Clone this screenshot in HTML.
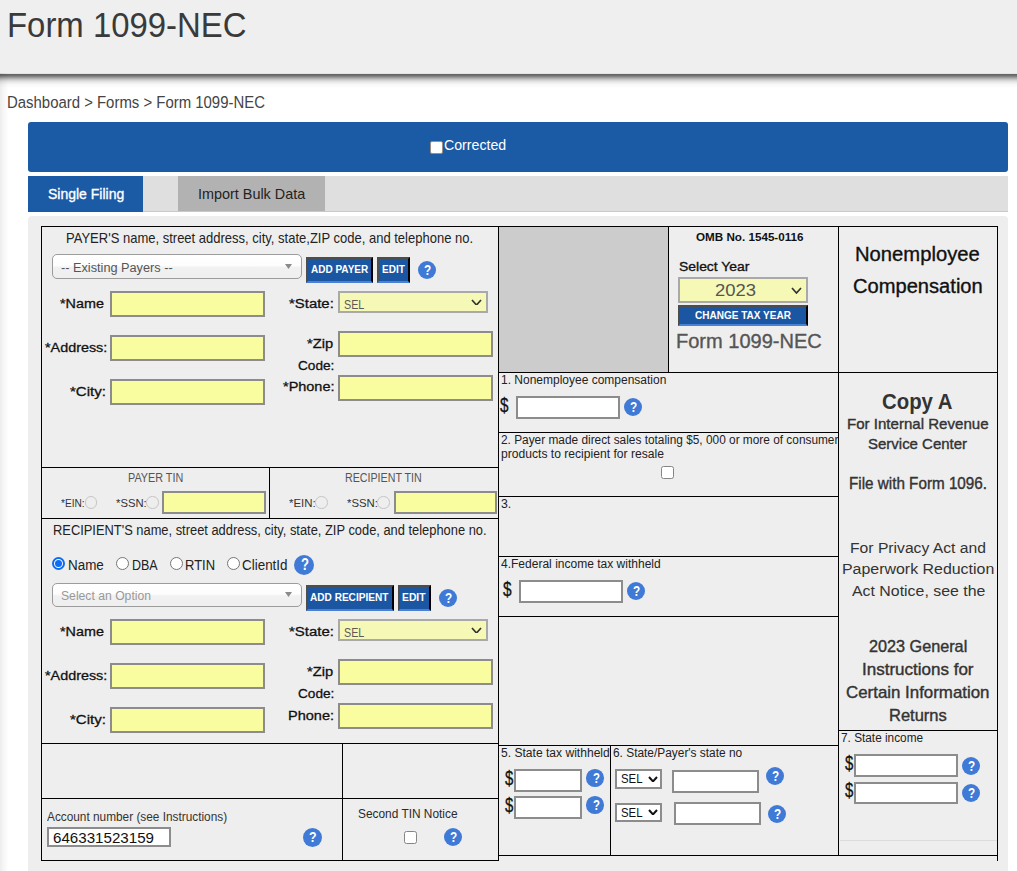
<!DOCTYPE html>
<html><head><meta charset="utf-8"><title>Form 1099-NEC</title>
<style>
html,body{margin:0;padding:0;background:#fff;width:1017px;height:871px;overflow:hidden;position:relative}
.t{position:absolute;white-space:nowrap;line-height:1;font-family:"Liberation Sans",sans-serif;transform-origin:0 0}
.r{position:absolute}
.bm{display:inline-block;width:0;height:0}
.q{position:absolute;border-radius:50%;background:#3f7ad6}
</style></head><body>
<div class="r" style="left:0px;top:0px;width:1017px;height:73px;background:#efefef"></div>
<div class="r" style="left:0px;top:73px;width:8px;height:798px;background:linear-gradient(90deg,#ededed,#f5f5f5 3px,#fcfcfc 7px,#fff)"></div>
<div class="r" style="left:0px;top:73px;width:1017px;height:1px;background:rgba(0,0,0,0.106)"></div>
<div class="r" style="left:0px;top:74px;width:1017px;height:1px;background:rgba(0,0,0,0.600)"></div>
<div class="r" style="left:0px;top:75px;width:1017px;height:1px;background:rgba(0,0,0,0.561)"></div>
<div class="r" style="left:0px;top:76px;width:1017px;height:1px;background:rgba(0,0,0,0.478)"></div>
<div class="r" style="left:0px;top:77px;width:1017px;height:1px;background:rgba(0,0,0,0.388)"></div>
<div class="r" style="left:0px;top:78px;width:1017px;height:1px;background:rgba(0,0,0,0.302)"></div>
<div class="r" style="left:0px;top:79px;width:1017px;height:1px;background:rgba(0,0,0,0.227)"></div>
<div class="r" style="left:0px;top:80px;width:1017px;height:1px;background:rgba(0,0,0,0.165)"></div>
<div class="r" style="left:0px;top:81px;width:1017px;height:1px;background:rgba(0,0,0,0.114)"></div>
<div class="r" style="left:0px;top:82px;width:1017px;height:1px;background:rgba(0,0,0,0.078)"></div>
<div class="r" style="left:0px;top:83px;width:1017px;height:1px;background:rgba(0,0,0,0.051)"></div>
<div class="r" style="left:0px;top:84px;width:1017px;height:1px;background:rgba(0,0,0,0.031)"></div>
<div class="r" style="left:0px;top:85px;width:1017px;height:1px;background:rgba(0,0,0,0.020)"></div>
<div class="r" style="left:0px;top:86px;width:1017px;height:1px;background:rgba(0,0,0,0.012)"></div>
<div class="r" style="left:0px;top:87px;width:1017px;height:1px;background:rgba(0,0,0,0.004)"></div>
<div class="t" style="left:7.07px;top:8.00px;font-size:34.59px;color:#3a3a3a;transform:scaleX(0.9513);">Form 1099-NEC<span class="bm"></span></div>
<div class="t" style="left:7.10px;top:94.10px;font-size:16.13px;color:#444;transform:scaleX(0.9263);">Dashboard &gt; Forms &gt; Form 1099-NEC<span class="bm"></span></div>
<div class="r" style="left:28px;top:122px;width:980px;height:50px;background:#1b5aa5;border-radius:3px"></div>
<div class="r" style="left:430px;top:141px;width:13px;height:13px;background:#fff;border:1px solid #9a8f80;border-radius:2px;box-sizing:border-box"></div>
<div class="t" style="left:443.79px;top:138.01px;font-size:14.97px;color:#fff;transform:scaleX(0.9453);">Corrected<span class="bm"></span></div>
<div class="r" style="left:28px;top:176px;width:980px;height:36px;background:#dfdfdf;border-bottom:1px solid #c9c9c9;box-sizing:border-box"></div>
<div class="r" style="left:28px;top:176px;width:115px;height:36px;background:#1b5aa5"></div>
<div class="t" style="left:47.57px;top:185.51px;font-size:15.12px;color:#fff;transform:scaleX(0.9263);-webkit-text-stroke:0.35px #fff;">Single Filing<span class="bm"></span></div>
<div class="r" style="left:178px;top:176px;width:147px;height:35px;background:#b2b2b2"></div>
<div class="t" style="left:197.90px;top:185.91px;font-size:15.55px;color:#222;transform:scaleX(0.9258);">Import Bulk Data<span class="bm"></span></div>
<div class="r" style="left:28px;top:216px;width:980px;height:684px;background:#eeeeee;border-radius:4px"></div>
<div class="r" style="left:499px;top:227px;width:169px;height:145px;background:#cccccc"></div>
<div class="r" style="left:41px;top:226px;width:457px;height:1px;background:#000"></div>
<div class="r" style="left:41px;top:226px;width:1px;height:635px;background:#000"></div>
<div class="r" style="left:41px;top:467px;width:457px;height:1px;background:#000"></div>
<div class="r" style="left:269px;top:467px;width:1px;height:51px;background:#000"></div>
<div class="r" style="left:41px;top:518px;width:457px;height:1px;background:#000"></div>
<div class="r" style="left:41px;top:743px;width:457px;height:1px;background:#000"></div>
<div class="r" style="left:342px;top:743px;width:1px;height:117px;background:#000"></div>
<div class="r" style="left:41px;top:798px;width:457px;height:1px;background:#000"></div>
<div class="r" style="left:41px;top:860px;width:457px;height:1px;background:#000"></div>
<div class="r" style="left:498px;top:226px;width:1px;height:635px;background:#000"></div>
<div class="r" style="left:498px;top:226px;width:500px;height:1px;background:#000"></div>
<div class="r" style="left:668px;top:226px;width:1px;height:146px;background:#000"></div>
<div class="r" style="left:838px;top:226px;width:1px;height:629px;background:#000"></div>
<div class="r" style="left:498px;top:372px;width:500px;height:1px;background:#000"></div>
<div class="r" style="left:498px;top:432px;width:340px;height:1px;background:#000"></div>
<div class="r" style="left:498px;top:496px;width:340px;height:1px;background:#000"></div>
<div class="r" style="left:498px;top:556px;width:340px;height:1px;background:#000"></div>
<div class="r" style="left:498px;top:616px;width:340px;height:1px;background:#000"></div>
<div class="r" style="left:498px;top:745px;width:340px;height:1px;background:#000"></div>
<div class="r" style="left:610px;top:745px;width:1px;height:110px;background:#000"></div>
<div class="r" style="left:498px;top:855px;width:500px;height:1px;background:#000"></div>
<div class="r" style="left:997px;top:226px;width:1px;height:635px;background:#000"></div>
<div class="r" style="left:838px;top:730px;width:160px;height:1px;background:#000"></div>
<div class="r" style="left:840px;top:840px;width:157px;height:1px;background:#dcdcdc"></div>
<div class="t" style="left:66.36px;top:231.20px;font-size:14.10px;color:#222;transform:scaleX(0.9228);">PAYER&#x27;S name, street address, city, state,ZIP code, and telephone no.<span class="bm"></span></div>
<div class="r" style="left:52px;top:254px;width:250px;height:25px;background:linear-gradient(#ffffff 0%,#fdfdfd 45%,#f1f1f1 55%,#efefef 100%);border:1px solid #9c9c9c;border-radius:5px;box-sizing:border-box"></div>
<div class="t" style="left:60.93px;top:261.61px;font-size:12.50px;color:#555;transform:scaleX(1.0173);">-- Existing Payers --<span class="bm"></span></div>
<svg class="r" style="left:285.0px;top:263.9px" width="7" height="4.9"><polygon points="0,0 7,0 3.5,4.9" fill="#8a8a8a"/></svg>
<div class="r" style="left:306px;top:257px;width:67px;height:26px;background:#1b56a2;border-style:solid;border-width:2px;border-color:#4d4d4d #000 #4a80d6 #4d4d4d;box-sizing:border-box"></div>
<div class="t" style="left:311.05px;top:264.91px;font-size:10.40px;color:#fff;font-weight:bold;transform:scaleX(0.9624);">ADD PAYER<span class="bm"></span></div>
<div class="r" style="left:377px;top:257px;width:33px;height:26px;background:#1b56a2;border-style:solid;border-width:2px;border-color:#4d4d4d #000 #4a80d6 #4d4d4d;box-sizing:border-box"></div>
<div class="t" style="left:381.95px;top:264.91px;font-size:10.40px;color:#fff;font-weight:bold;transform:scaleX(0.9615);">EDIT<span class="bm"></span></div>
<div class="q" style="left:418.0px;top:261.0px;width:18px;height:18px"></div>
<div class="t" style="left:424.47px;top:263.00px;font-size:14.53px;color:#fff;font-weight:bold;transform:scaleX(0.8094);">?<span class="bm"></span></div>
<div class="t" style="left:60.48px;top:297.01px;font-size:13.08px;color:#111;transform:scaleX(1.0975);-webkit-text-stroke:0.3px #111;">*Name<span class="bm"></span></div>
<div class="r" style="left:110px;top:291px;width:155px;height:26px;background:#fafca0;border:2px solid #8c8c8c;box-sizing:border-box"></div>
<div class="t" style="left:44.98px;top:341.01px;font-size:13.23px;color:#111;transform:scaleX(1.0867);-webkit-text-stroke:0.3px #111;">*Address:<span class="bm"></span></div>
<div class="r" style="left:110px;top:335px;width:155px;height:26px;background:#fafca0;border:2px solid #8c8c8c;box-sizing:border-box"></div>
<div class="t" style="left:70.37px;top:385.20px;font-size:13.23px;color:#111;transform:scaleX(1.1407);-webkit-text-stroke:0.3px #111;">*City:<span class="bm"></span></div>
<div class="r" style="left:110px;top:379px;width:155px;height:26px;background:#fafca0;border:2px solid #8c8c8c;box-sizing:border-box"></div>
<div class="t" style="left:289.28px;top:297.01px;font-size:13.23px;color:#111;transform:scaleX(1.1282);-webkit-text-stroke:0.3px #111;">*State:<span class="bm"></span></div>
<div class="r" style="left:338px;top:291px;width:150px;height:22px;background:#f6f8b6;border:2px solid #a9a9a9;box-sizing:border-box"></div>
<div class="t" style="left:344.02px;top:299.32px;font-size:12.50px;color:#5a5a5a;transform:scaleX(0.8595);">SEL<span class="bm"></span></div>
<svg class="r" style="left:470.5px;top:298.5px" width="11" height="6.95"><polyline points="1,1 5.5,6.0 10.0,1" fill="none" stroke="#333" stroke-width="1.7"/></svg>
<div class="t" style="left:307.18px;top:336.51px;font-size:13.23px;color:#111;transform:scaleX(1.1121);-webkit-text-stroke:0.3px #111;">*Zip<span class="bm"></span></div>
<div class="t" style="left:297.62px;top:359.40px;font-size:13.23px;color:#111;transform:scaleX(1.0300);-webkit-text-stroke:0.3px #111;">Code:<span class="bm"></span></div>
<div class="r" style="left:338px;top:331px;width:155px;height:26px;background:#fafca0;border:2px solid #8c8c8c;box-sizing:border-box"></div>
<div class="t" style="left:282.58px;top:380.31px;font-size:13.23px;color:#111;transform:scaleX(1.0935);-webkit-text-stroke:0.3px #111;">*Phone:<span class="bm"></span></div>
<div class="r" style="left:338px;top:375px;width:155px;height:26px;background:#fafca0;border:2px solid #8c8c8c;box-sizing:border-box"></div>
<div class="t" style="left:127.93px;top:473.01px;font-size:11.92px;color:#555;transform:scaleX(0.9085);">PAYER TIN<span class="bm"></span></div>
<div class="t" style="left:61.35px;top:496.51px;font-size:11.63px;color:#333;transform:scaleX(0.8697);">*EIN:<span class="bm"></span></div>
<div class="r" style="left:84.6px;top:496px;width:12.5px;height:12.5px;border-radius:50%;border:1px solid #c6c6c6;box-sizing:border-box"></div>
<div class="t" style="left:116.33px;top:496.51px;font-size:11.63px;color:#333;transform:scaleX(0.9702);">*SSN:<span class="bm"></span></div>
<div class="r" style="left:146px;top:496px;width:12.5px;height:12.5px;border-radius:50%;border:1px solid #c6c6c6;box-sizing:border-box"></div>
<div class="r" style="left:162px;top:491px;width:104px;height:23px;background:#fafca0;border:2px solid #8c8c8c;box-sizing:border-box"></div>
<div class="t" style="left:345.15px;top:473.01px;font-size:11.92px;color:#555;transform:scaleX(0.8958);">RECIPIENT TIN<span class="bm"></span></div>
<div class="t" style="left:289.33px;top:496.51px;font-size:11.63px;color:#333;transform:scaleX(0.9856);">*EIN:<span class="bm"></span></div>
<div class="r" style="left:315px;top:496px;width:12.5px;height:12.5px;border-radius:50%;border:1px solid #c6c6c6;box-sizing:border-box"></div>
<div class="t" style="left:347.13px;top:496.51px;font-size:11.63px;color:#333;transform:scaleX(0.9767);">*SSN:<span class="bm"></span></div>
<div class="r" style="left:377px;top:496px;width:12.5px;height:12.5px;border-radius:50%;border:1px solid #c6c6c6;box-sizing:border-box"></div>
<div class="r" style="left:393.5px;top:491px;width:103.5px;height:23px;background:#fafca0;border:2px solid #8c8c8c;box-sizing:border-box"></div>
<div class="t" style="left:52.97px;top:523.82px;font-size:13.81px;color:#222;transform:scaleX(0.9333);">RECIPIENT&#x27;S name, street address, city, state, ZIP code, and telephone no.<span class="bm"></span></div>
<div class="r" style="left:52px;top:557px;width:13px;height:13px;border-radius:50%;border:2px solid #0b6cf4;box-sizing:border-box;background:#fff"></div>
<div class="r" style="left:55px;top:560px;width:7px;height:7px;border-radius:50%;background:#0b6cf4"></div>
<div class="t" style="left:68.03px;top:558.00px;font-size:14.24px;color:#222;transform:scaleX(0.9425);">Name<span class="bm"></span></div>
<div class="r" style="left:116px;top:557px;width:13px;height:13px;border-radius:50%;border:1px solid #767676;box-sizing:border-box;background:#fff"></div>
<div class="t" style="left:131.70px;top:558.00px;font-size:14.24px;color:#222;transform:scaleX(0.8780);">DBA<span class="bm"></span></div>
<div class="r" style="left:170px;top:557px;width:13px;height:13px;border-radius:50%;border:1px solid #767676;box-sizing:border-box;background:#fff"></div>
<div class="t" style="left:184.96px;top:558.00px;font-size:14.24px;color:#222;transform:scaleX(0.9122);">RTIN<span class="bm"></span></div>
<div class="r" style="left:227px;top:557px;width:13px;height:13px;border-radius:50%;border:1px solid #767676;box-sizing:border-box;background:#fff"></div>
<div class="t" style="left:242.33px;top:558.00px;font-size:14.24px;color:#222;transform:scaleX(0.9432);">ClientId<span class="bm"></span></div>
<div class="q" style="left:294.0px;top:554.5px;width:20px;height:20px"></div>
<div class="t" style="left:301.19px;top:556.06px;font-size:16.15px;color:#fff;font-weight:bold;transform:scaleX(0.8094);">?<span class="bm"></span></div>
<div class="r" style="left:52px;top:583px;width:250px;height:24px;background:linear-gradient(#ffffff 0%,#fdfdfd 45%,#f1f1f1 55%,#efefef 100%);border:1px solid #9c9c9c;border-radius:5px;box-sizing:border-box"></div>
<div class="t" style="left:60.75px;top:589.01px;font-size:13.08px;color:#999;transform:scaleX(0.9308);">Select an Option<span class="bm"></span></div>
<svg class="r" style="left:285.0px;top:591.9px" width="7" height="4.9"><polygon points="0,0 7,0 3.5,4.9" fill="#8a8a8a"/></svg>
<div class="r" style="left:306px;top:585px;width:88px;height:26px;background:#1b56a2;border-style:solid;border-width:2px;border-color:#4d4d4d #000 #4a80d6 #4d4d4d;box-sizing:border-box"></div>
<div class="t" style="left:310.35px;top:593.00px;font-size:10.40px;color:#fff;font-weight:bold;transform:scaleX(0.9696);">ADD RECIPIENT<span class="bm"></span></div>
<div class="r" style="left:398px;top:585px;width:33px;height:26px;background:#1b56a2;border-style:solid;border-width:2px;border-color:#4d4d4d #000 #4a80d6 #4d4d4d;box-sizing:border-box"></div>
<div class="t" style="left:401.83px;top:593.00px;font-size:10.40px;color:#fff;font-weight:bold;transform:scaleX(0.9921);">EDIT<span class="bm"></span></div>
<div class="q" style="left:439.0px;top:589.0px;width:18px;height:18px"></div>
<div class="t" style="left:445.47px;top:591.00px;font-size:14.53px;color:#fff;font-weight:bold;transform:scaleX(0.8094);">?<span class="bm"></span></div>
<div class="t" style="left:60.48px;top:624.81px;font-size:13.23px;color:#111;transform:scaleX(1.0855);-webkit-text-stroke:0.3px #111;">*Name<span class="bm"></span></div>
<div class="r" style="left:110px;top:619px;width:155px;height:26px;background:#fafca0;border:2px solid #8c8c8c;box-sizing:border-box"></div>
<div class="t" style="left:44.98px;top:669.01px;font-size:13.23px;color:#111;transform:scaleX(1.0867);-webkit-text-stroke:0.3px #111;">*Address:<span class="bm"></span></div>
<div class="r" style="left:110px;top:663px;width:155px;height:26px;background:#fafca0;border:2px solid #8c8c8c;box-sizing:border-box"></div>
<div class="t" style="left:70.37px;top:712.60px;font-size:13.23px;color:#111;transform:scaleX(1.1407);-webkit-text-stroke:0.3px #111;">*City:<span class="bm"></span></div>
<div class="r" style="left:110px;top:707px;width:155px;height:26px;background:#fafca0;border:2px solid #8c8c8c;box-sizing:border-box"></div>
<div class="t" style="left:288.78px;top:624.70px;font-size:13.23px;color:#111;transform:scaleX(1.1334);-webkit-text-stroke:0.3px #111;">*State:<span class="bm"></span></div>
<div class="r" style="left:338px;top:619px;width:150px;height:22px;background:#f6f8b6;border:2px solid #a9a9a9;box-sizing:border-box"></div>
<div class="t" style="left:344.02px;top:627.32px;font-size:12.50px;color:#5a5a5a;transform:scaleX(0.8595);">SEL<span class="bm"></span></div>
<svg class="r" style="left:470.5px;top:626.5px" width="11" height="6.95"><polyline points="1,1 5.5,6.0 10.0,1" fill="none" stroke="#333" stroke-width="1.7"/></svg>
<div class="t" style="left:307.18px;top:664.81px;font-size:13.23px;color:#111;transform:scaleX(1.1121);-webkit-text-stroke:0.3px #111;">*Zip<span class="bm"></span></div>
<div class="t" style="left:297.62px;top:687.40px;font-size:13.23px;color:#111;transform:scaleX(1.0300);-webkit-text-stroke:0.3px #111;">Code:<span class="bm"></span></div>
<div class="r" style="left:338px;top:659px;width:155px;height:26px;background:#fafca0;border:2px solid #8c8c8c;box-sizing:border-box"></div>
<div class="t" style="left:288.04px;top:708.60px;font-size:13.23px;color:#111;transform:scaleX(1.0981);-webkit-text-stroke:0.3px #111;">Phone:<span class="bm"></span></div>
<div class="r" style="left:338px;top:703px;width:155px;height:26px;background:#fafca0;border:2px solid #8c8c8c;box-sizing:border-box"></div>
<div class="t" style="left:47.20px;top:810.50px;font-size:12.35px;color:#333;transform:scaleX(0.9581);">Account number (see Instructions)<span class="bm"></span></div>
<div class="r" style="left:47px;top:827px;width:124px;height:20px;background:#fff;border:2px solid #8c8c8c;box-sizing:border-box"></div>
<div class="t" style="left:52.64px;top:830.71px;font-size:14.97px;color:#111;transform:scaleX(1.0111);">646331523159<span class="bm"></span></div>
<div class="q" style="left:302.5px;top:827.5px;width:19px;height:19px"></div>
<div class="t" style="left:309.33px;top:829.29px;font-size:15.34px;color:#fff;font-weight:bold;transform:scaleX(0.8094);">?<span class="bm"></span></div>
<div class="t" style="left:358.46px;top:808.11px;font-size:12.65px;color:#2a2a2a;transform:scaleX(0.9402);">Second TIN Notice<span class="bm"></span></div>
<div class="r" style="left:404px;top:831px;width:13px;height:13px;border-radius:2.5px;border:1px solid #858585;box-sizing:border-box;background:#fff"></div>
<div class="q" style="left:444.0px;top:828.0px;width:18px;height:18px"></div>
<div class="t" style="left:450.47px;top:830.00px;font-size:14.53px;color:#fff;font-weight:bold;transform:scaleX(0.8094);">?<span class="bm"></span></div>
<div class="t" style="left:695.93px;top:232.60px;font-size:10.47px;color:#111;font-weight:bold;transform:scaleX(1.1132);">OMB No. 1545-0116<span class="bm"></span></div>
<div class="t" style="left:678.67px;top:259.71px;font-size:13.66px;color:#111;transform:scaleX(1.0198);-webkit-text-stroke:0.35px #111;">Select Year<span class="bm"></span></div>
<div class="r" style="left:678px;top:277px;width:130px;height:26px;background:#f6f8b6;border:2px solid #a9a9a9;box-sizing:border-box"></div>
<div class="t" style="left:715.08px;top:281.70px;font-size:17.15px;color:#555;transform:scaleX(1.0760);">2023<span class="bm"></span></div>
<svg class="r" style="left:790.5px;top:287.0px" width="11" height="6.95"><polyline points="1,1 5.5,6.0 10.0,1" fill="none" stroke="#333" stroke-width="1.7"/></svg>
<div class="r" style="left:678px;top:305px;width:130px;height:21px;background:#1b56a2;border-style:solid;border-width:2px;border-color:#4d4d4d #000 #4a80d6 #4d4d4d;box-sizing:border-box"></div>
<div class="t" style="left:695.00px;top:310.31px;font-size:10.60px;color:#fff;font-weight:bold;transform:scaleX(0.9459);">CHANGE TAX YEAR<span class="bm"></span></div>
<div class="t" style="left:676.10px;top:331.32px;font-size:20.20px;color:#555;transform:scaleX(0.9920);-webkit-text-stroke:0.35px #555;">Form 1099-NEC<span class="bm"></span></div>
<div class="t" style="left:855.08px;top:244.11px;font-size:20.78px;color:#111;transform:scaleX(0.9734);-webkit-text-stroke:0.35px #111;">Nonemployee<span class="bm"></span></div>
<div class="t" style="left:852.79px;top:275.50px;font-size:20.35px;color:#111;transform:scaleX(0.9891);-webkit-text-stroke:0.35px #111;">Compensation<span class="bm"></span></div>
<div class="t" style="left:500.50px;top:374.00px;font-size:12.50px;color:#222;transform:scaleX(0.9592);">1. Nonemployee compensation<span class="bm"></span></div>
<div class="t" style="left:500.05px;top:395.50px;font-size:19.50px;color:#111;transform:scaleX(0.7837);-webkit-text-stroke:0.3px #111;">$<span class="bm"></span></div>
<div class="r" style="left:516px;top:396px;width:104px;height:23px;background:#fff;border:2px solid #8c8c8c;box-sizing:border-box"></div>
<div class="q" style="left:624.0px;top:398.0px;width:18px;height:18px"></div>
<div class="t" style="left:630.47px;top:400.00px;font-size:14.53px;color:#fff;font-weight:bold;transform:scaleX(0.8094);">?<span class="bm"></span></div>
<div class="t" style="left:500.81px;top:433.70px;font-size:12.50px;color:#222;transform:scaleX(0.9485);">2. Payer made direct sales totaling $5, 000 or more of consumer<span class="bm"></span></div>
<div class="t" style="left:500.61px;top:447.81px;font-size:12.50px;color:#222;transform:scaleX(0.9691);">products to recipient for resale<span class="bm"></span></div>
<div class="r" style="left:660.5px;top:466px;width:13px;height:13px;border-radius:2.5px;border:1px solid #858585;box-sizing:border-box;background:#fff"></div>
<div class="t" style="left:500.91px;top:497.70px;font-size:12.50px;color:#222;transform:scaleX(0.9829);">3.<span class="bm"></span></div>
<div class="t" style="left:500.56px;top:557.70px;font-size:12.50px;color:#222;transform:scaleX(0.9618);">4.Federal income tax withheld<span class="bm"></span></div>
<div class="t" style="left:502.75px;top:579.71px;font-size:19.50px;color:#111;transform:scaleX(0.7934);-webkit-text-stroke:0.3px #111;">$<span class="bm"></span></div>
<div class="r" style="left:519px;top:580px;width:104px;height:23px;background:#fff;border:2px solid #8c8c8c;box-sizing:border-box"></div>
<div class="q" style="left:627.0px;top:582.0px;width:18px;height:18px"></div>
<div class="t" style="left:633.47px;top:584.00px;font-size:14.53px;color:#fff;font-weight:bold;transform:scaleX(0.8094);">?<span class="bm"></span></div>
<div class="t" style="left:501.32px;top:746.50px;font-size:12.50px;color:#222;transform:scaleX(0.9663);">5. State tax withheld<span class="bm"></span></div>
<div class="t" style="left:612.91px;top:746.50px;font-size:12.50px;color:#222;transform:scaleX(0.9511);">6. State/Payer&#x27;s state no<span class="bm"></span></div>
<div class="t" style="left:505.05px;top:768.60px;font-size:19.50px;color:#111;transform:scaleX(0.7644);-webkit-text-stroke:0.3px #111;">$<span class="bm"></span></div>
<div class="r" style="left:514px;top:769px;width:68px;height:23px;background:#fff;border:2px solid #8c8c8c;box-sizing:border-box"></div>
<div class="q" style="left:586.2px;top:769.2px;width:17.5px;height:17.5px"></div>
<div class="t" style="left:592.54px;top:770.87px;font-size:14.13px;color:#fff;font-weight:bold;transform:scaleX(0.8094);">?<span class="bm"></span></div>
<div class="t" style="left:505.05px;top:795.90px;font-size:19.50px;color:#111;transform:scaleX(0.7644);-webkit-text-stroke:0.3px #111;">$<span class="bm"></span></div>
<div class="r" style="left:514px;top:796px;width:68px;height:23px;background:#fff;border:2px solid #8c8c8c;box-sizing:border-box"></div>
<div class="q" style="left:586.2px;top:796.2px;width:17.5px;height:17.5px"></div>
<div class="t" style="left:592.54px;top:797.87px;font-size:14.13px;color:#fff;font-weight:bold;transform:scaleX(0.8094);">?<span class="bm"></span></div>
<div class="r" style="left:615px;top:769px;width:47px;height:20px;background:#fff;border:2px solid #8c8c8c;box-sizing:border-box"></div>
<div class="t" style="left:621.19px;top:773.00px;font-size:12.79px;color:#111;transform:scaleX(0.8917);">SEL<span class="bm"></span></div>
<svg class="r" style="left:648.0px;top:775.8px" width="10" height="6.4"><polyline points="1,1 5.0,5.4 9.0,1" fill="none" stroke="#111" stroke-width="2"/></svg>
<div class="r" style="left:672px;top:770px;width:87px;height:23px;background:#fff;border:2px solid #8c8c8c;box-sizing:border-box"></div>
<div class="q" style="left:766.0px;top:767.0px;width:18px;height:18px"></div>
<div class="t" style="left:772.47px;top:769.00px;font-size:14.53px;color:#fff;font-weight:bold;transform:scaleX(0.8094);">?<span class="bm"></span></div>
<div class="r" style="left:615px;top:803px;width:47px;height:19px;background:#fff;border:2px solid #8c8c8c;box-sizing:border-box"></div>
<div class="t" style="left:621.19px;top:806.50px;font-size:12.79px;color:#111;transform:scaleX(0.8917);">SEL<span class="bm"></span></div>
<svg class="r" style="left:648.0px;top:808.8px" width="10" height="6.4"><polyline points="1,1 5.0,5.4 9.0,1" fill="none" stroke="#111" stroke-width="2"/></svg>
<div class="r" style="left:674px;top:802px;width:87px;height:23px;background:#fff;border:2px solid #8c8c8c;box-sizing:border-box"></div>
<div class="q" style="left:768.0px;top:805.0px;width:18px;height:18px"></div>
<div class="t" style="left:774.47px;top:807.00px;font-size:14.53px;color:#fff;font-weight:bold;transform:scaleX(0.8094);">?<span class="bm"></span></div>
<div class="t" style="left:882.18px;top:391.01px;font-size:22.53px;color:#333;font-weight:bold;transform:scaleX(0.9047);">Copy A<span class="bm"></span></div>
<div class="t" style="left:846.59px;top:416.60px;font-size:14.97px;color:#333;transform:scaleX(1.0066);-webkit-text-stroke:0.38px #333;">For Internal Revenue<span class="bm"></span></div>
<div class="t" style="left:867.53px;top:436.01px;font-size:15.26px;color:#333;transform:scaleX(0.9824);-webkit-text-stroke:0.38px #333;">Service Center<span class="bm"></span></div>
<div class="t" style="left:848.68px;top:476.00px;font-size:15.99px;color:#333;transform:scaleX(0.9531);-webkit-text-stroke:0.38px #333;">File with Form 1096.<span class="bm"></span></div>
<div class="t" style="left:850.04px;top:539.60px;font-size:15.26px;color:#333;transform:scaleX(1.0284);">For Privacy Act and<span class="bm"></span></div>
<div class="t" style="left:842.23px;top:562.31px;font-size:14.83px;color:#333;transform:scaleX(1.0739);">Paperwork Reduction<span class="bm"></span></div>
<div class="t" style="left:851.80px;top:584.40px;font-size:14.97px;color:#333;transform:scaleX(1.0614);">Act Notice, see the<span class="bm"></span></div>
<div class="t" style="left:869.09px;top:639.00px;font-size:15.99px;color:#333;transform:scaleX(1.0142);-webkit-text-stroke:0.38px #333;">2023 General<span class="bm"></span></div>
<div class="t" style="left:862.07px;top:661.81px;font-size:15.99px;color:#333;transform:scaleX(1.0638);-webkit-text-stroke:0.38px #333;">Instructions for<span class="bm"></span></div>
<div class="t" style="left:846.26px;top:685.00px;font-size:15.99px;color:#333;transform:scaleX(1.0556);-webkit-text-stroke:0.38px #333;">Certain Information<span class="bm"></span></div>
<div class="t" style="left:888.98px;top:707.91px;font-size:15.99px;color:#333;transform:scaleX(1.0329);-webkit-text-stroke:0.38px #333;">Returns<span class="bm"></span></div>
<div class="t" style="left:840.81px;top:731.70px;font-size:12.50px;color:#222;transform:scaleX(0.9448);">7. State income<span class="bm"></span></div>
<div class="t" style="left:845.05px;top:753.61px;font-size:19.50px;color:#111;transform:scaleX(0.7644);-webkit-text-stroke:0.3px #111;">$<span class="bm"></span></div>
<div class="r" style="left:854px;top:754px;width:104px;height:23px;background:#fff;border:2px solid #8c8c8c;box-sizing:border-box"></div>
<div class="q" style="left:962.0px;top:757.0px;width:18px;height:18px"></div>
<div class="t" style="left:968.47px;top:759.00px;font-size:14.53px;color:#fff;font-weight:bold;transform:scaleX(0.8094);">?<span class="bm"></span></div>
<div class="t" style="left:845.05px;top:780.91px;font-size:19.50px;color:#111;transform:scaleX(0.7644);-webkit-text-stroke:0.3px #111;">$<span class="bm"></span></div>
<div class="r" style="left:854px;top:782px;width:104px;height:22px;background:#fff;border:2px solid #8c8c8c;box-sizing:border-box"></div>
<div class="q" style="left:962.0px;top:784.0px;width:18px;height:18px"></div>
<div class="t" style="left:968.47px;top:786.00px;font-size:14.53px;color:#fff;font-weight:bold;transform:scaleX(0.8094);">?<span class="bm"></span></div>
</body></html>
